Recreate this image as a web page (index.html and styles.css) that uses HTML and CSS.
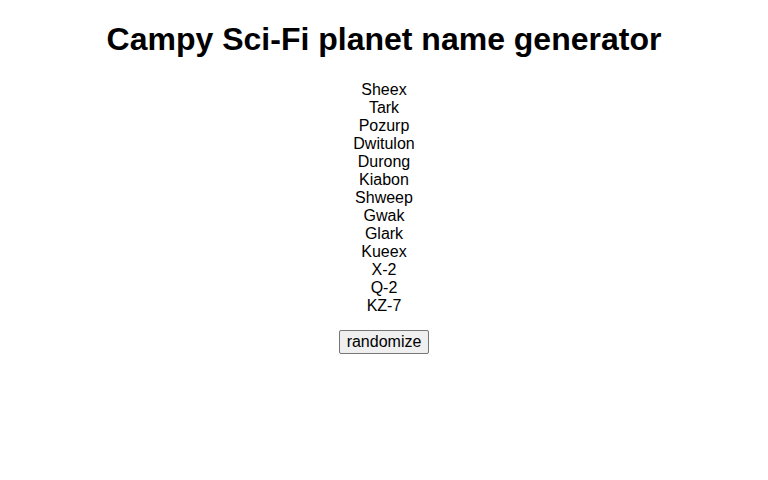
FILE: index.html
```html
<!DOCTYPE html>
<html>
<head>
<meta charset="utf-8">
<link rel="stylesheet" href="styles.css">
</head>
<body>
<main class="app">
  <h1 class="title">Campy Sci-Fi planet name generator</h1>
  <ul class="names">
    <li>Sheex</li>
    <li>Tark</li>
    <li>Pozurp</li>
    <li>Dwitulon</li>
    <li>Durong</li>
    <li>Kiabon</li>
    <li>Shweep</li>
    <li>Gwak</li>
    <li>Glark</li>
    <li>Kueex</li>
    <li>X-2</li>
    <li>Q-2</li>
    <li>KZ-7</li>
  </ul>
  <button class="randomize" type="button">randomize</button>
</main>
</body>
</html>
```

FILE: styles.css
```css
html, body {
  margin: 0;
  padding: 0;
  background: #ffffff;
}

body {
  font-family: "Liberation Sans", Arial, sans-serif;
  color: #000000;
}

.app {
  display: flex;
  flex-direction: column;
  align-items: center;
  text-align: center;
}

.title {
  font-size: 32px;
  font-weight: bold;
  line-height: 37px;
  margin: 21px 0 23px;
}

.names {
  list-style: none;
  margin: 0;
  padding: 0;
  font-size: 16px;
  line-height: 18px;
}

.randomize {
  margin-top: 15px;
  font-family: "Liberation Sans", Arial, sans-serif;
  font-size: 16px;
  line-height: 18px;
  padding: 2px 7px;
  color: #000000;
  background: #efefef;
  border: 1px solid #767676;
  border-radius: 2px;
}
```
